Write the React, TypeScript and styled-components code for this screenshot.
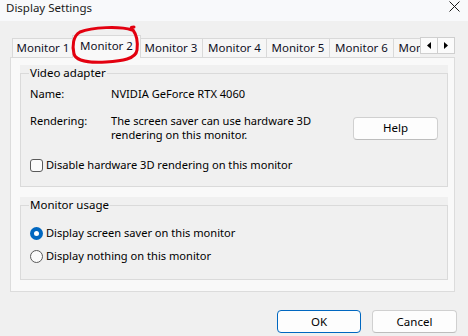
import React from "react";
import styled, { createGlobalStyle } from "styled-components";

const GlobalStyle = createGlobalStyle`
  html, body {
    margin: 0;
    padding: 0;
    background: #f0f0f0;
  }
  * { box-sizing: border-box; }
`;

const Window = styled.div`
  width: 468px;
  height: 336px;
  display: flex;
  flex-direction: column;
  background: #f0f0f0;
  font-family: "Noto Sans", "Open Sans", sans-serif;
  font-size: 11.1px;
  color: #000;
  overflow: hidden;
  position: relative;
`;

const TitleBar = styled.div`
  height: 21px;
  display: flex;
  align-items: flex-start;
  justify-content: space-between;
  padding: 0 8px 0 6px;
  background: #f8f9fb;
`;

const TitleText = styled.div`
  font-size: 11.5px;
  line-height: 15px;
  color: #1a1a1a;
`;

const CloseIcon = styled.svg`
  margin-top: 1px;
`;

const Body = styled.div`
  padding: 14px 13px 0 10px;
  display: flex;
  flex-direction: column;
`;

const TabStrip = styled.div`
  display: flex;
  align-items: flex-end;
  height: 22px;
  padding-left: 2px;
  position: relative;
  z-index: 2;
`;

const TabViewport = styled.div`
  display: flex;
  align-items: flex-end;
  width: 408px;
  overflow: hidden;
  height: 23px;
  margin-bottom: -1px;
`;

const Tab = styled.div<{ $w: number; $active?: boolean }>`
  flex: 0 0 ${(p) => p.$w}px;
  height: ${(p) => (p.$active ? 23 : 20)}px;
  margin-left: ${(p) => (p.$active ? -2 : -1)}px;
  margin-right: ${(p) => (p.$active ? -1 : 0)}px;
  border: 1px solid #d9d9d9;
  border-bottom: ${(p) => (p.$active ? "none" : "1px solid #d9d9d9")};
  background: ${(p) => (p.$active ? "#f9f9f9" : "#f6f6f6")};
  position: relative;
  z-index: ${(p) => (p.$active ? 2 : 1)};
  display: flex;
  justify-content: center;
  padding-top: ${(p) => (p.$active ? 2 : 1)}px;
  line-height: 16px;
  font-size: 11.5px;
  white-space: nowrap;
  color: #10101e;
  &:first-child {
    margin-left: 0;
  }
`;

const ScrollButtons = styled.div`
  display: flex;
  align-self: flex-start;
  margin-top: 2px;
`;

const ScrollButton = styled.div`
  width: 18px;
  height: 17px;
  border: 1px solid #cfcfcf;
  background: #fbfbfb;
  display: flex;
  align-items: center;
  justify-content: center;
  & + & {
    margin-left: -1px;
  }
`;

const Panel = styled.div`
  height: 235px;
  border: 1px solid #dcdcdc;
  background: #f9f9f9;
  padding: 7px 6px 0 9px;
  display: flex;
  flex-direction: column;
  gap: 10px;
`;

const Group = styled.div`
  background: #f0f0f0;
  padding-top: 1px;
`;

const Frame = styled.fieldset<{ $h: number }>`
  margin: 0;
  height: ${(p) => p.$h}px;
  border: 1px solid #dadada;
  padding: 0 9px 0 9px;
  display: flex;
  flex-direction: column;
`;

const Legend = styled.legend`
  padding: 0 1px;
  margin-left: -1px;
  line-height: 14px;
  font-size: 11.5px;
`;

const Row = styled.div`
  display: grid;
  grid-template-columns: 81px 1fr auto;
  align-items: center;
`;

const Label = styled.div`
  line-height: 16px;
`;

const Value = styled.div`
  line-height: 14px;
`;

const Button = styled.button<{ $primary?: boolean }>`
  width: ${(p) => (p.$primary ? 84 : 85)}px;
  height: 23px;
  border-radius: 4px;
  border: 1px solid ${(p) => (p.$primary ? "#0067c0" : "#d0d0d0")};
  border-bottom-color: ${(p) => (p.$primary ? "#0067c0" : "#bdbdbd")};
  background: #fdfdfd;
  font-family: inherit;
  font-size: 11.5px;
  color: #000;
  padding: 0;
  line-height: 16px;
`;

const CheckRow = styled.label`
  display: flex;
  align-items: center;
  gap: 3px;
  line-height: 16px;
`;

const CheckBox = styled.span`
  width: 13px;
  height: 13px;
  border: 1px solid #5a5a5a;
  border-radius: 3px;
  background: #fbfbfb;
  flex: 0 0 13px;
`;

const Radio = styled.span<{ $checked?: boolean }>`
  width: 13px;
  height: 13px;
  flex: 0 0 13px;
  border-radius: 50%;
  border: ${(p) => (p.$checked ? "none" : "1px solid #5a5a5a")};
  background: ${(p) => (p.$checked ? "#0067c0" : "#fbfbfb")};
  display: flex;
  align-items: center;
  justify-content: center;
  &::after {
    content: "";
    display: ${(p) => (p.$checked ? "block" : "none")};
    width: 5px;
    height: 5px;
    border-radius: 50%;
    background: #fff;
  }
`;

const Footer = styled.div`
  display: flex;
  justify-content: flex-end;
  gap: 11px;
  padding-top: 18px;
  margin-right: -2px;
`;

const Annotation = styled.svg`
  position: absolute;
  left: 70px;
  top: 24px;
  pointer-events: none;
  z-index: 5;
`;

const tabs = [
  { name: "Monitor 1", w: 62 },
  { name: "Monitor 2", w: 69, active: true },
  { name: "Monitor 3", w: 64 },
  { name: "Monitor 4", w: 65 },
  { name: "Monitor 5", w: 64 },
  { name: "Monitor 6", w: 65 },
  { name: "Monitor 7", w: 64 },
];

export default function App() {
  return (
    <Window>
      <GlobalStyle />
      <TitleBar>
        <TitleText>Display Settings</TitleText>
        <CloseIcon width="11" height="11" viewBox="0 0 11 11">
          <path d="M0.5 0.5 L10.5 10.5 M10.5 0.5 L0.5 10.5" stroke="#1a1a1a" strokeWidth="1" />
        </CloseIcon>
      </TitleBar>
      <Body>
        <TabStrip>
          <TabViewport>
            {tabs.map((t) => (
              <Tab key={t.name} $w={t.w} $active={t.active}>
                {t.name}
              </Tab>
            ))}
          </TabViewport>
          <ScrollButtons>
            <ScrollButton>
              <svg width="4" height="7" viewBox="0 0 4 7">
                <path d="M4 0 L0 3.5 L4 7 Z" fill="#000" />
              </svg>
            </ScrollButton>
            <ScrollButton>
              <svg width="4" height="7" viewBox="0 0 4 7">
                <path d="M0 0 L4 3.5 L0 7 Z" fill="#000" />
              </svg>
            </ScrollButton>
          </ScrollButtons>
        </TabStrip>
        <Panel>
          <Group>
            <Frame $h={121}>
              <Legend>Video adapter</Legend>
              <Row style={{ marginTop: 6 }}>
                <Label>Name:</Label>
                <Value>NVIDIA GeForce RTX 4060</Value>
              </Row>
              <Row style={{ marginTop: 12 }}>
                <Label style={{ alignSelf: "start", marginTop: -1 }}>Rendering:</Label>
                <Value>
                  The screen saver can use hardware 3D
                  <br />
                  rendering on this monitor.
                </Value>
                <Button>Help</Button>
              </Row>
              <CheckRow style={{ marginTop: 15 }}>
                <CheckBox />
                Disable hardware 3D rendering on this monitor
              </CheckRow>
            </Frame>
          </Group>
          <Group>
            <Frame $h={82}>
              <Legend>Monitor usage</Legend>
              <CheckRow style={{ marginTop: 13 }}>
                <Radio $checked />
                Display screen saver on this monitor
              </CheckRow>
              <CheckRow style={{ marginTop: 7 }}>
                <Radio />
                Display nothing on this monitor
              </CheckRow>
            </Frame>
          </Group>
        </Panel>
        <Footer>
          <Button $primary>OK</Button>
          <Button>Cancel</Button>
        </Footer>
      </Body>
      <Annotation width="72" height="42" viewBox="0 0 72 42">
        <path
          d="M62 6 C50 2 22 3 10 8 C3 12 2 22 4 30 C6 37 20 39 36 38 C52 37 66 35 67 26 C68 18 66 10 63 6 C61 4 60 3 64 3"
          fill="none"
          stroke="#e3000f"
          strokeWidth="3"
          strokeLinecap="round"
        />
      </Annotation>
    </Window>
  );
}
